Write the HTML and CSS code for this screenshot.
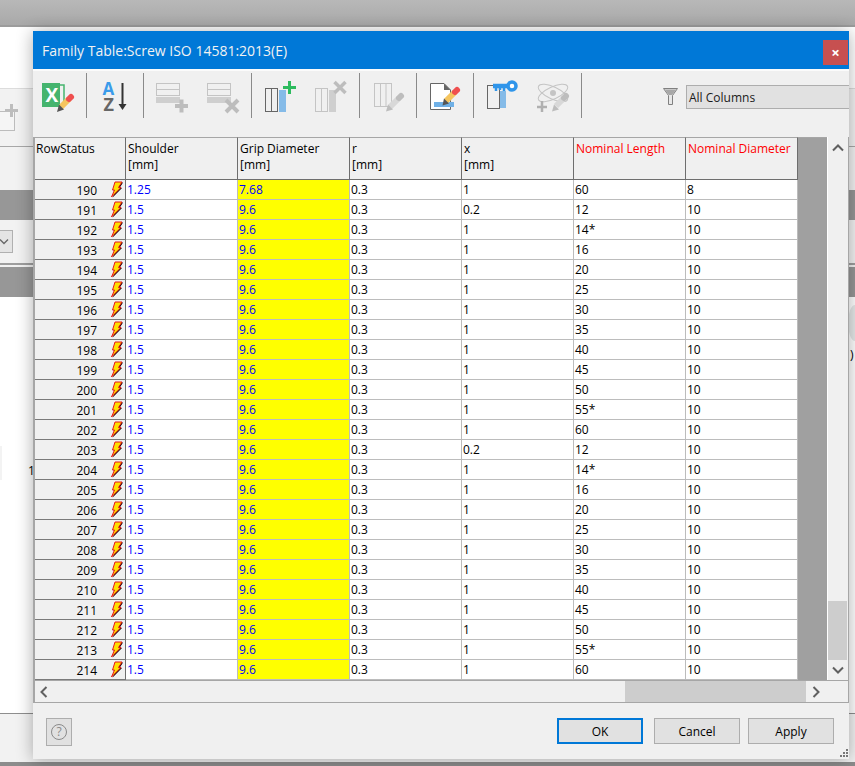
FILE: index.html
```html
<!DOCTYPE html>
<html lang="en">
<head>
<meta charset="utf-8">
<title>Family Table</title>
<link rel="stylesheet" href="styles.css">
</head>
<body>
<svg class="defs" width="0" height="0" aria-hidden="true">
  <symbol id="bolt" viewBox="0 0 14 17">
    <polygon points="6,1.5 13,1.5 9.5,7 12,7 2.5,16.5 5.5,9.5 3.5,9.5" fill="#000"/>
    <polygon points="5,1 12,1 8.5,6.5 11,6.5 1.5,16 4.5,9 2.5,9" fill="#ffdf00" stroke="#e8141c" stroke-width="1"/>
  </symbol>
</svg>

<div class="app">
  <div class="app-top"></div>
  <div class="app-white"></div>
  <div class="ribbon"><div class="ribbon-box"></div><span class="ribbon-plus"></span></div>
  <div class="ribbon-low"></div>
  <div class="band"></div>
  <div class="combo-row">
    <div class="bg-combo"><svg width="10" height="6" viewBox="0 0 10 6"><polyline points="0,0.5 4,4.5 8,0.5" fill="none" stroke="#666" stroke-width="1.3"/></svg></div>
    <div class="combo-line"></div>
  </div>
  <div class="band"></div>
  <div class="canvas">
    <div class="bg-box"></div>
    <span class="bg-one">1</span>
    <span class="bg-paren">)</span>
    <div class="bg-blob"></div>
  </div>
  <div class="app-bottom"></div>
  <div class="app-edge"></div>
</div>

<section class="dialog">
  <header class="titlebar">
    <span class="title">Family Table:Screw ISO 14581:2013(E)</span>
    <button class="close" type="button">×</button>
  </header>

  <div class="toolbar">
    <div class="group g1">
      <svg class="ic" viewBox="0 0 36 36">
        <path d="M17 7h5v20h-5" fill="none" stroke="#45b46e" stroke-width="1.5"/>
        <rect x="0" y="5" width="18" height="24" fill="#45b46e"/>
        <text x="3.500" y="24" class="ic-x">X</text>
        <line x1="19" y1="29" x2="27" y2="21" stroke="#f5c55f" stroke-width="6"/>
        <line x1="27" y1="21" x2="29" y2="19" stroke="#ef4f4f" stroke-width="6" stroke-linecap="round"/>
        <polygon points="15,34 17,26.5 22,31.5" fill="#555"/>
      </svg>
    </div>
    <div class="group g2">
      <svg class="ic" viewBox="0 0 36 36">
        <text x="5.500" y="16.500" class="ic-a">A</text>
        <text x="6.500" y="32.500" class="ic-z">Z</text>
        <line x1="25.5" y1="5" x2="25.5" y2="27" stroke="#333" stroke-width="2"/>
        <polygon points="21.5,26 29.5,26 25.5,32" fill="#333"/>
      </svg>
    </div>
    <div class="group g3">
      <svg class="ic" viewBox="0 0 36 36">
        <rect x="2.5" y="5.5" width="23" height="12" fill="none" stroke="#c4c4c4"/>
        <line x1="2.5" y1="11.5" x2="25.5" y2="11.5" stroke="#c4c4c4"/>
        <rect x="2" y="19" width="24" height="6" fill="#cfcfcf"/>
        <path d="M27.5 21.5v13M21 28h13" stroke="#bdbdbd" stroke-width="4" fill="none"/>
      </svg>
      <svg class="ic" viewBox="0 0 36 36">
        <rect x="2.5" y="5.5" width="23" height="12" fill="none" stroke="#c4c4c4"/>
        <line x1="2.5" y1="11.5" x2="25.5" y2="11.5" stroke="#c4c4c4"/>
        <rect x="2" y="19" width="24" height="6" fill="#cfcfcf"/>
        <path d="M21 22l12 12M33 22l-12 12" stroke="#bdbdbd" stroke-width="4" fill="none"/>
      </svg>
    </div>
    <div class="group g4">
      <svg class="ic" viewBox="0 0 36 36">
        <rect x="2.5" y="10.5" width="12" height="23" fill="none" stroke="#666"/>
        <line x1="8.5" y1="10.5" x2="8.5" y2="33.5" stroke="#666"/>
        <rect x="16" y="12" width="7" height="22" fill="#85bbe8"/>
        <path d="M26.5 3v13M20 9.5h13" stroke="#2dbb5e" stroke-width="3" fill="none"/>
      </svg>
      <svg class="ic" viewBox="0 0 36 36">
        <rect x="2.5" y="10.5" width="12" height="23" fill="none" stroke="#c4c4c4"/>
        <line x1="8.5" y1="10.5" x2="8.5" y2="33.5" stroke="#c4c4c4"/>
        <rect x="16" y="12" width="7" height="22" fill="#cfcfcf"/>
        <path d="M21.5 4l11 11M32.5 4l-11 11" stroke="#bdbdbd" stroke-width="3.5" fill="none"/>
      </svg>
    </div>
    <div class="group g5">
      <svg class="ic" viewBox="0 0 36 36">
        <rect x="4.5" y="5.5" width="17" height="23" fill="none" stroke="#c4c4c4"/>
        <path d="M10.5 5.5v23M16 5.5v23" stroke="#c4c4c4" fill="none"/>
        <line x1="20" y1="29" x2="29" y2="20" stroke="#d8d8d8" stroke-width="6"/>
        <line x1="29" y1="20" x2="31" y2="18" stroke="#bdbdbd" stroke-width="6" stroke-linecap="round"/>
        <polygon points="16,33.5 18,26.5 23,31.5" fill="#bdbdbd"/>
      </svg>
    </div>
    <div class="group g6">
      <svg class="ic" viewBox="0 0 36 36">
        <path d="M3.5 5.5H17L23.5 12V31.500H3.500Z" fill="#fff" stroke="#666" stroke-width="1"/>
        <path d="M17 5.500L23.500 12H17Z" fill="#666"/>
        <rect x="7" y="24" width="20" height="5" fill="#6fb0e6"/>
        <line x1="19" y1="23" x2="28" y2="14" stroke="#f5c55f" stroke-width="6"/>
        <line x1="28" y1="14" x2="30" y2="12" stroke="#ef4f4f" stroke-width="6" stroke-linecap="round"/>
        <polygon points="15.500,27.500 17,20.500 22,25.500" fill="#555"/>
      </svg>
    </div>
    <div class="group g7">
      <svg class="ic" viewBox="0 0 36 36">
        <rect x="3.500" y="7.500" width="12" height="23" fill="none" stroke="#666"/>
        <rect x="16" y="13" width="6" height="17" fill="#85bbe8"/>
        <path d="M9 8h15" stroke="#2f95ea" stroke-width="4.500" fill="none"/>
        <path d="M12 10v3M16 10v2M20 10v3" stroke="#2f95ea" stroke-width="2.500" fill="none"/>
        <circle cx="28" cy="8" r="4" fill="#fff" stroke="#2f95ea" stroke-width="3.500"/>
      </svg>
      <svg class="ic" viewBox="0 0 36 36">
        <g fill="none" stroke="#c4c4c4">
          <ellipse cx="18" cy="15" rx="16" ry="6" transform="rotate(25 18 15)"/>
          <ellipse cx="18" cy="15" rx="16" ry="6" transform="rotate(-25 18 15)"/>
        </g>
        <circle cx="18" cy="15" r="3" fill="#c4c4c4"/>
        <line x1="21" y1="28" x2="29" y2="20" stroke="#d8d8d8" stroke-width="6"/>
        <line x1="29" y1="20" x2="31" y2="18" stroke="#bdbdbd" stroke-width="6" stroke-linecap="round"/>
        <polygon points="17,33.500 19,26.500 24,31.500" fill="#bdbdbd"/>
        <path d="M7 23v11M2 29h10" stroke="#b0b0b0" stroke-width="2.500" fill="none"/>
      </svg>
    </div>
    <div class="filter">
      <svg class="funnel" width="15" height="17" viewBox="0 0 15 17">
        <path d="M0.500 0.500H14.500L9.500 7.500V16.500H5.500V7.500Z" fill="#e8e8e8" stroke="#808080"/>
        <path d="M1.500 1.500H13.500L9 7H6Z" fill="#a8a8a8"/>
      </svg>
      <div class="filter-box">All Columns</div>
    </div>
  </div>

  <div class="frame">
    <div class="main">
      <table class="grid">
        <colgroup><col class="c-status"><col class="c-data"><col class="c-data"><col class="c-data"><col class="c-data"><col class="c-data"><col class="c-data"></colgroup>
        <thead>
          <tr><th class="th-status">RowStatus</th><th>Shoulder<br>[mm]</th><th>Grip Diameter<br>[mm]</th><th>r<br>[mm]</th><th>x<br>[mm]</th><th class="red">Nominal Length</th><th class="red">Nominal Diameter</th></tr>
        </thead>
        <tbody>
          <tr><td class="rs"><div class="rs-in"><span>190</span><svg class="bolt"><use href="#bolt"/></svg></div></td><td class="blue">1.25</td><td class="grip">7.68</td><td>0.3</td><td>1</td><td>60</td><td>8</td></tr>
          <tr><td class="rs"><div class="rs-in"><span>191</span><svg class="bolt"><use href="#bolt"/></svg></div></td><td class="blue">1.5</td><td class="grip">9.6</td><td>0.3</td><td>0.2</td><td>12</td><td>10</td></tr>
          <tr><td class="rs"><div class="rs-in"><span>192</span><svg class="bolt"><use href="#bolt"/></svg></div></td><td class="blue">1.5</td><td class="grip">9.6</td><td>0.3</td><td>1</td><td>14*</td><td>10</td></tr>
          <tr><td class="rs"><div class="rs-in"><span>193</span><svg class="bolt"><use href="#bolt"/></svg></div></td><td class="blue">1.5</td><td class="grip">9.6</td><td>0.3</td><td>1</td><td>16</td><td>10</td></tr>
          <tr><td class="rs"><div class="rs-in"><span>194</span><svg class="bolt"><use href="#bolt"/></svg></div></td><td class="blue">1.5</td><td class="grip">9.6</td><td>0.3</td><td>1</td><td>20</td><td>10</td></tr>
          <tr><td class="rs"><div class="rs-in"><span>195</span><svg class="bolt"><use href="#bolt"/></svg></div></td><td class="blue">1.5</td><td class="grip">9.6</td><td>0.3</td><td>1</td><td>25</td><td>10</td></tr>
          <tr><td class="rs"><div class="rs-in"><span>196</span><svg class="bolt"><use href="#bolt"/></svg></div></td><td class="blue">1.5</td><td class="grip">9.6</td><td>0.3</td><td>1</td><td>30</td><td>10</td></tr>
          <tr><td class="rs"><div class="rs-in"><span>197</span><svg class="bolt"><use href="#bolt"/></svg></div></td><td class="blue">1.5</td><td class="grip">9.6</td><td>0.3</td><td>1</td><td>35</td><td>10</td></tr>
          <tr><td class="rs"><div class="rs-in"><span>198</span><svg class="bolt"><use href="#bolt"/></svg></div></td><td class="blue">1.5</td><td class="grip">9.6</td><td>0.3</td><td>1</td><td>40</td><td>10</td></tr>
          <tr><td class="rs"><div class="rs-in"><span>199</span><svg class="bolt"><use href="#bolt"/></svg></div></td><td class="blue">1.5</td><td class="grip">9.6</td><td>0.3</td><td>1</td><td>45</td><td>10</td></tr>
          <tr><td class="rs"><div class="rs-in"><span>200</span><svg class="bolt"><use href="#bolt"/></svg></div></td><td class="blue">1.5</td><td class="grip">9.6</td><td>0.3</td><td>1</td><td>50</td><td>10</td></tr>
          <tr><td class="rs"><div class="rs-in"><span>201</span><svg class="bolt"><use href="#bolt"/></svg></div></td><td class="blue">1.5</td><td class="grip">9.6</td><td>0.3</td><td>1</td><td>55*</td><td>10</td></tr>
          <tr><td class="rs"><div class="rs-in"><span>202</span><svg class="bolt"><use href="#bolt"/></svg></div></td><td class="blue">1.5</td><td class="grip">9.6</td><td>0.3</td><td>1</td><td>60</td><td>10</td></tr>
          <tr><td class="rs"><div class="rs-in"><span>203</span><svg class="bolt"><use href="#bolt"/></svg></div></td><td class="blue">1.5</td><td class="grip">9.6</td><td>0.3</td><td>0.2</td><td>12</td><td>10</td></tr>
          <tr><td class="rs"><div class="rs-in"><span>204</span><svg class="bolt"><use href="#bolt"/></svg></div></td><td class="blue">1.5</td><td class="grip">9.6</td><td>0.3</td><td>1</td><td>14*</td><td>10</td></tr>
          <tr><td class="rs"><div class="rs-in"><span>205</span><svg class="bolt"><use href="#bolt"/></svg></div></td><td class="blue">1.5</td><td class="grip">9.6</td><td>0.3</td><td>1</td><td>16</td><td>10</td></tr>
          <tr><td class="rs"><div class="rs-in"><span>206</span><svg class="bolt"><use href="#bolt"/></svg></div></td><td class="blue">1.5</td><td class="grip">9.6</td><td>0.3</td><td>1</td><td>20</td><td>10</td></tr>
          <tr><td class="rs"><div class="rs-in"><span>207</span><svg class="bolt"><use href="#bolt"/></svg></div></td><td class="blue">1.5</td><td class="grip">9.6</td><td>0.3</td><td>1</td><td>25</td><td>10</td></tr>
          <tr><td class="rs"><div class="rs-in"><span>208</span><svg class="bolt"><use href="#bolt"/></svg></div></td><td class="blue">1.5</td><td class="grip">9.6</td><td>0.3</td><td>1</td><td>30</td><td>10</td></tr>
          <tr><td class="rs"><div class="rs-in"><span>209</span><svg class="bolt"><use href="#bolt"/></svg></div></td><td class="blue">1.5</td><td class="grip">9.6</td><td>0.3</td><td>1</td><td>35</td><td>10</td></tr>
          <tr><td class="rs"><div class="rs-in"><span>210</span><svg class="bolt"><use href="#bolt"/></svg></div></td><td class="blue">1.5</td><td class="grip">9.6</td><td>0.3</td><td>1</td><td>40</td><td>10</td></tr>
          <tr><td class="rs"><div class="rs-in"><span>211</span><svg class="bolt"><use href="#bolt"/></svg></div></td><td class="blue">1.5</td><td class="grip">9.6</td><td>0.3</td><td>1</td><td>45</td><td>10</td></tr>
          <tr><td class="rs"><div class="rs-in"><span>212</span><svg class="bolt"><use href="#bolt"/></svg></div></td><td class="blue">1.5</td><td class="grip">9.6</td><td>0.3</td><td>1</td><td>50</td><td>10</td></tr>
          <tr><td class="rs"><div class="rs-in"><span>213</span><svg class="bolt"><use href="#bolt"/></svg></div></td><td class="blue">1.5</td><td class="grip">9.6</td><td>0.3</td><td>1</td><td>55*</td><td>10</td></tr>
          <tr><td class="rs"><div class="rs-in"><span>214</span><svg class="bolt"><use href="#bolt"/></svg></div></td><td class="blue">1.5</td><td class="grip">9.6</td><td>0.3</td><td>1</td><td>60</td><td>10</td></tr>
        </tbody>
      </table>
      <div class="void"></div>
      <div class="vscroll">
        <div class="v-btn"><svg width="12" height="8" viewBox="0 0 12 8"><polyline points="1,6.500 6,1.500 11,6.500" fill="none" stroke="#606060" stroke-width="2"/></svg></div>
        <div class="v-thumb"></div>
        <div class="v-btn"><svg width="12" height="8" viewBox="0 0 12 8"><polyline points="1,1.500 6,6.500 11,1.500" fill="none" stroke="#606060" stroke-width="2"/></svg></div>
      </div>
    </div>
    <div class="hscroll">
      <div class="h-btn h-left"><svg width="8" height="12" viewBox="0 0 8 12"><polyline points="6.500,1 1.500,6 6.500,11" fill="none" stroke="#606060" stroke-width="2"/></svg></div>
      <div class="h-thumb"></div>
      <div class="h-btn h-right"><svg width="8" height="12" viewBox="0 0 8 12"><polyline points="1.500,1 6.500,6 1.500,11" fill="none" stroke="#606060" stroke-width="2"/></svg></div>
    </div>
  </div>

  <footer class="footer">
    <div class="help"><span class="help-ring">?</span></div>
    <div class="actions">
      <button class="btn btn-ok" type="button">OK</button>
      <button class="btn btn-cancel" type="button">Cancel</button>
      <button class="btn" type="button">Apply</button>
    </div>
    <svg class="grip-handle" width="10" height="10" viewBox="0 0 10 10"><path d="M7 1h2v2H7zM4 4h2v2H4zM7 4h2v2H7zM1 7h2v2H1zM4 7h2v2H4zM7 7h2v2H7z" fill="#777"/></svg>
  </footer>
</section>
</body>
</html>
```

FILE: styles.css
```css
* { box-sizing: border-box; }
html, body { margin: 0; height: 766px; overflow: hidden; }
body { position: relative; font-family: "Open Sans", "Noto Sans", sans-serif; font-size: 12px; color: #000; background: #fff; }
.defs { position: absolute; }

/* application behind the dialog */
.app { height: 766px; display: flex; flex-direction: column; }
.app-top { height: 27px; background: linear-gradient(#b8b8b8, #a9a9a9); border-bottom: 2px solid #9c9c9c; }
.app-white { height: 61px; background: #fff; }
.ribbon { height: 59px; position: relative; background: #f2f2f2; border-top: 1px solid #dcdcdc; border-bottom: 1px solid #a8a8a8; padding-top: 22px; }
.ribbon-box { width: 15px; height: 20px; background: #f5f5f5; border: 1px solid #bcbcbc; border-left: 0; }
.ribbon-plus { position: absolute; left: 5px; top: 15px; width: 13px; height: 13px; background: linear-gradient(#bdbdbd, #bdbdbd) center / 13px 3px no-repeat, linear-gradient(#bdbdbd, #bdbdbd) center / 3px 13px no-repeat; }
.ribbon-low { height: 43px; background: #f2f2f2; }
.band { height: 30px; background: #979797; flex: none; }
.combo-row { height: 47px; background: #f2f2f2; padding-top: 10px; flex: none; }
.bg-combo { width: 13px; height: 23px; background: #e4e4e4; border: 1px solid #b0b0b0; border-left: 0; display: flex; align-items: center; }
.combo-line { height: 2px; margin-top: 10px; background: #9e9e9e; }
.canvas { flex: 1; position: relative; background: #fff; }
.bg-box { position: absolute; left: 0; top: 149px; width: 2px; height: 34px; background: #f3f3f3; }
.bg-one { position: absolute; left: 28px; top: 166px; font-size: 12px; line-height: 16px; z-index: 2; }
.bg-paren { position: absolute; left: 850px; top: 50px; font-size: 12px; line-height: 16px; }
.bg-blob { position: absolute; left: 848px; top: 8px; width: 14px; height: 36px; border-radius: 50%; background: #e6e9e9; }
.app-bottom { height: 49px; flex: none; background: #f2f2f2; border-top: 1px solid #8e8e8e; }
.app-edge { height: 4px; flex: none; background: #8c8c8c; }

/* dialog */
.dialog { position: absolute; left: 33px; top: 31px; width: 816px; height: 728px; display: flex; flex-direction: column; background: #f0f0f0; box-shadow: 0 1px 16px rgba(0, 0, 0, .32); }
.titlebar { height: 38px; flex: none; background: #0078d7; display: flex; align-items: flex-start; justify-content: space-between; }
.title { color: #f2f2f2; font-size: 14px; line-height: 20px; margin: 10px 0 0 9px; }
.close { width: 25px; height: 25px; margin: 9px 1px 0 0; padding: 0; border: 0; background: #c75050; color: #fff; font: bold 15px/25px "Open Sans", sans-serif; }

.toolbar { height: 68px; flex: none; border-top: 2px solid #fbfbfb; display: flex; align-items: flex-start; padding-top: 2px; }
.group { height: 45px; flex: none; display: flex; align-items: flex-start; padding-top: 5px; border-right: 1px solid #8a8a8a; }
.g1 { width: 54px; padding-left: 9px; }
.g2 { width: 57px; padding-left: 10px; }
.g3 { width: 108px; padding-left: 10px; gap: 15px; }
.g4 { width: 108px; padding-left: 11px; gap: 14px; }
.g5 { width: 57px; padding-left: 10px; }
.g6 { width: 57px; padding-left: 10px; }
.g7 { width: 108px; padding-left: 10px; gap: 15px; }
.ic { width: 36px; height: 36px; flex: none; overflow: visible; }
.ic-x { font: bold 19px "Open Sans", sans-serif; fill: #fff; }
.ic-a { font: bold 17px "Open Sans", sans-serif; fill: #3a9bea; }
.ic-z { font: bold 18px "Open Sans", sans-serif; fill: #666; }
.filter { margin-left: 81px; margin-top: 12px; flex: 1; display: flex; align-items: flex-start; gap: 8px; }
.funnel { margin-top: 3px; flex: none; }
.filter-box { flex: 1; height: 24px; background: #e1e1e1; border: 1px solid #adadad; border-right: 0; line-height: 24px; padding-left: 2px; color: #1a1a1a; }

/* grid */
.frame { height: 566px; flex: none; border-left: 2px solid #a6a6a6; border-right: 1px solid #a6a6a6; border-bottom: 1px solid #a6a6a6; display: flex; flex-direction: column; }
.main { height: 544px; flex: none; display: flex; border-bottom: 1px solid #a6a6a6; background: #fff; }
.grid { width: 763px; height: 543px; flex: none; table-layout: fixed; border-collapse: separate; border-spacing: 0; background: #fff; }
.c-status { width: 91px; }
.c-data { width: 112px; }
.grid th { height: 43px; padding: 3px 0 0 2px; text-align: left; vertical-align: top; font-weight: 400; line-height: 16px; background: #f0f0f0; border-top: 1px solid #a6a6a6; border-right: 1px solid #6e6e6e; border-bottom: 1px solid #6e6e6e; white-space: nowrap; overflow: hidden; }
.grid th.th-status { padding-left: 1px; }
.grid th.red { color: #f00; }
.grid td { height: 20px; padding: 1px 0 0 1px; line-height: 18px; border-right: 1px solid #bcbcbc; border-bottom: 1px solid #bcbcbc; white-space: nowrap; color: #000; }
.grid td.rs { background: #f0f0f0; padding: 0; border-right-color: #6e6e6e; border-bottom-color: #7a7a7a; }
.rs-in { display: flex; justify-content: flex-end; align-items: center; height: 19px; padding-right: 1px; }
.rs-in span { line-height: 19px; padding-top: 2px; }
.bolt { width: 14px; height: 17px; margin-left: 13px; flex: none; }
.grid td.blue { color: #00f; }
.grid td.grip { color: #00f; background: #ff0; }
.void { width: 29px; flex: none; background: #a0a0a0; border-top: 1px solid #a6a6a6; margin-right: 1px; }
.vscroll { width: 20px; flex: none; background: #f0f0f0; display: flex; flex-direction: column; }
.v-btn { height: 22px; flex: none; display: flex; align-items: center; justify-content: center; }
.v-thumb { width: 19px; height: 59px; margin-top: auto; background: #cdcdcd; }
.vscroll .v-btn:last-child { height: 20px; }

.hscroll { height: 21px; flex: none; display: flex; align-items: stretch; background: #f0f0f0; }
.h-btn { flex: none; display: flex; align-items: center; }
.h-left { width: 18px; padding-left: 5px; }
.h-thumb { width: 181px; margin-left: auto; background: #cdcdcd; }
.h-right { width: 42px; padding-left: 6px; }

/* footer */
.footer { flex: 1; position: relative; display: flex; justify-content: space-between; align-items: flex-start; padding: 15px 15px 0 13px; }
.help { width: 26px; height: 28px; background: #e1e1e1; border: 1px solid #adadad; display: flex; align-items: center; justify-content: center; }
.help-ring { width: 16px; height: 16px; border: 1px solid #8a8a8a; border-radius: 50%; color: #8a8a8a; font-size: 12px; line-height: 14px; text-align: center; }
.actions { display: flex; gap: 8px; }
.btn { width: 86px; height: 26px; padding: 0; background: #e1e1e1; border: 1px solid #adadad; font: 12px "Open Sans", sans-serif; color: #000; }
.btn-ok { border: 2px solid #0078d7; }
.btn-cancel { margin-left: 3px; }
.grip-handle { position: absolute; right: 0; bottom: 1px; }
```
